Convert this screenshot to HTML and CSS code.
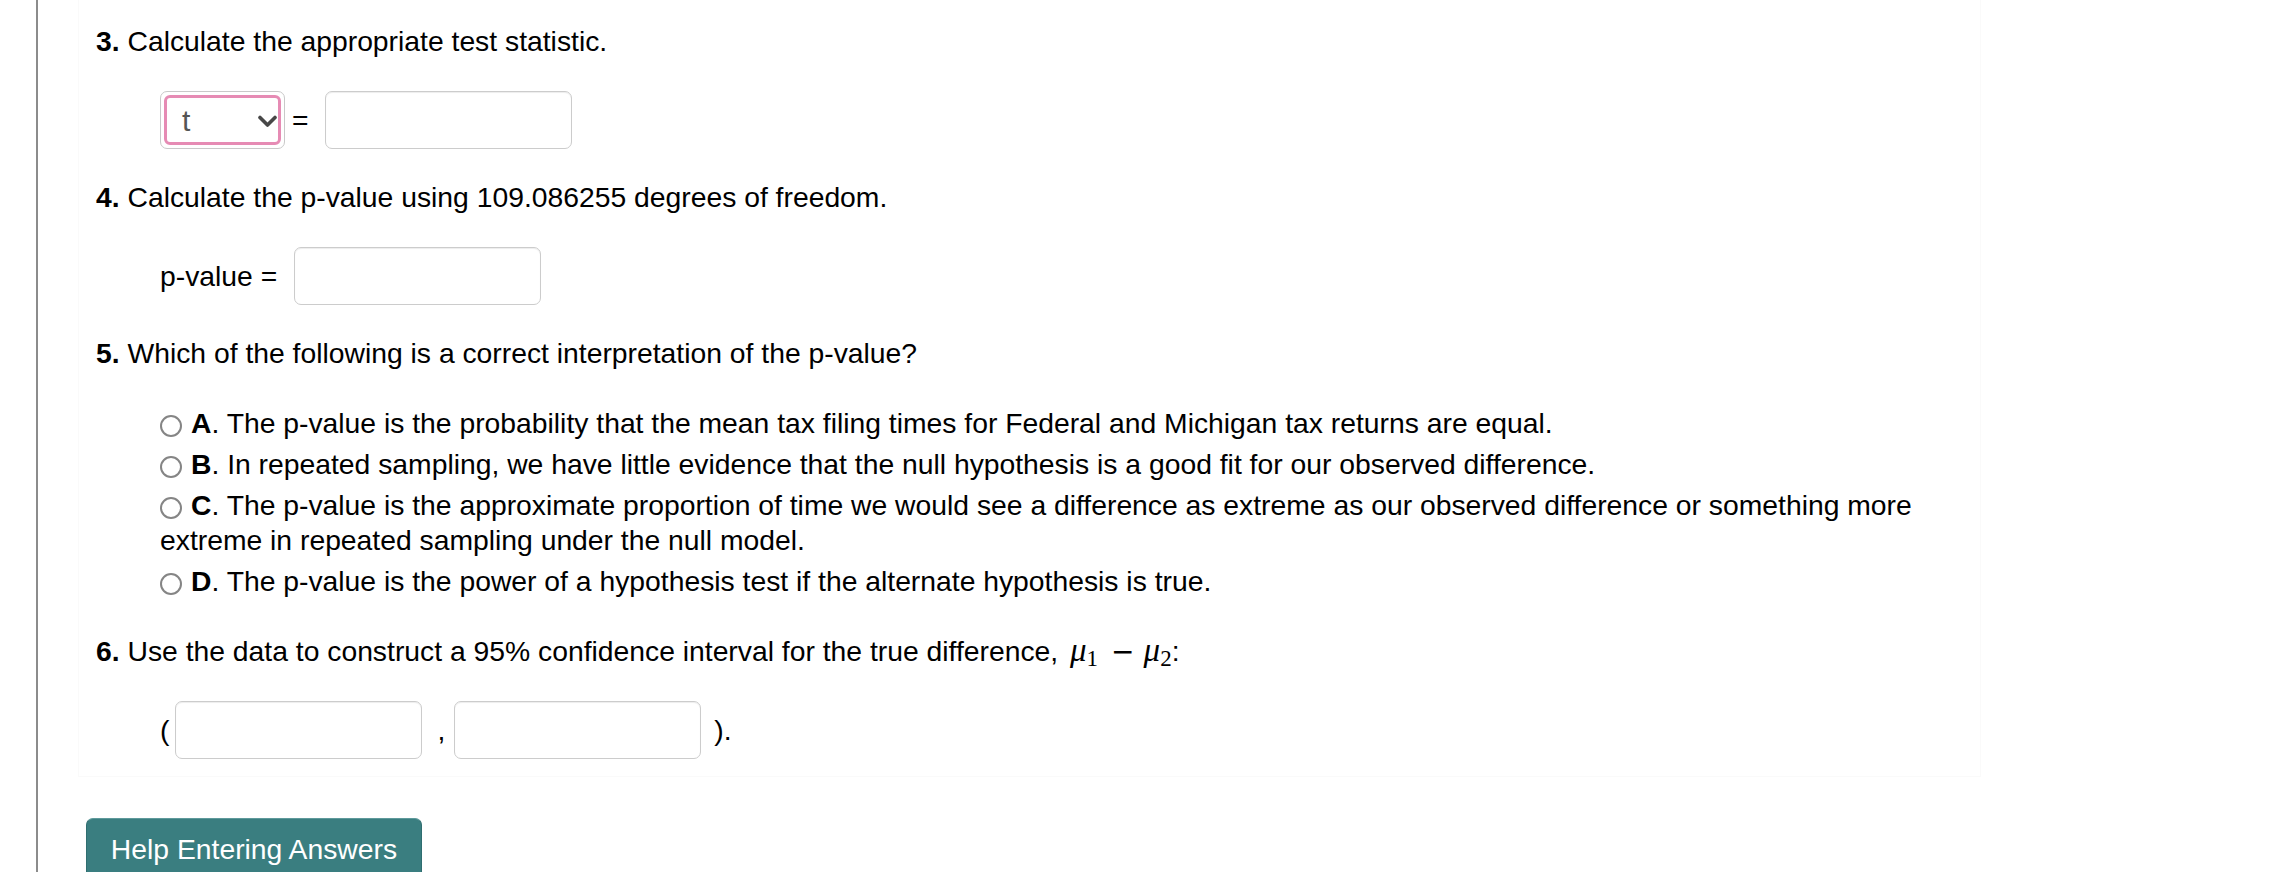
FILE: index.html
```html
<!DOCTYPE html>
<html lang="en">
<head>
<meta charset="utf-8">
<title>Hypothesis test</title>
<link rel="stylesheet" href="styles.css">
</head>
<body>
<div class="page">
  <div class="panel">
    <p class="q"><b>3.</b> Calculate the appropriate test statistic.</p>
    <div class="row">
      <span class="select">
        <span class="select-inner">
          <span class="select-val">t</span>
          <svg class="chev" width="19" height="13" viewBox="0 0 19 13"><path d="M2 2.5 L9.5 10 L17 2.5" fill="none" stroke="#474747" stroke-width="3.6" stroke-linecap="round" stroke-linejoin="round"/></svg>
        </span>
      </span>
      <span class="eq">=</span>
      <input class="ans" type="text">
    </div>

    <p class="q"><b>4.</b> Calculate the p-value using 109.086255 degrees of freedom.</p>
    <div class="row">
      <span>p-value =</span>
      <input class="ans ans-p" type="text">
    </div>

    <p class="q"><b>5.</b> Which of the following is a correct interpretation of the p-value?</p>
    <div class="opts">
      <label class="opt"><input class="radio" type="radio" name="interp"><b>A</b>. The p-value is the probability that the mean tax filing times for Federal and Michigan tax returns are equal.</label>
      <label class="opt"><input class="radio" type="radio" name="interp"><b>B</b>. In repeated sampling, we have little evidence that the null hypothesis is a good fit for our observed difference.</label>
      <label class="opt"><input class="radio" type="radio" name="interp"><b>C</b>. The p-value is the approximate proportion of time we would see a difference as extreme as our observed difference or something more extreme in repeated sampling under the null model.</label>
      <label class="opt"><input class="radio" type="radio" name="interp"><b>D</b>. The p-value is the power of a hypothesis test if the alternate hypothesis is true.</label>
    </div>

    <p class="q"><b>6.</b> Use the data to construct a 95% confidence interval for the true difference, <span class="math"><i>μ</i><sub>1</sub><span class="minus">−</span><i>μ</i><sub>2</sub></span>:</p>
    <div class="row">
      <span>(</span>
      <input class="ans ans-lo" type="text">
      <span class="comma">,</span>
      <input class="ans ans-hi" type="text">
      <span class="close">).</span>
    </div>
  </div>
  <button class="help" type="button">Help Entering Answers</button>
</div>
</body>
</html>
```
FILE: styles.css
```css
html, body {
  margin: 0;
  padding: 0;
  overflow: hidden;
  background: #fff;
}

body {
  font-family: "Liberation Sans", Arial, Helvetica, sans-serif;
  font-size: 28.3px;
  line-height: 35px;
  color: #000;
}

.page {
  margin-left: 36px;
  border-left: 2px solid #8c8c8c;
  padding-left: 40px;
  min-height: 100vh;
  padding-bottom: 20px;
}

.panel {
  width: 1903px;
  box-sizing: border-box;
  border: 1px solid #fafafa;
  border-top: none;
  padding: 24px 17px 17px 17px;
}

.q {
  margin: 0 0 32px 0;
}

.row {
  display: flex;
  align-items: center;
  margin: 0 0 31px 64px;
  height: 58px;
}

.panel .row:last-child {
  margin-bottom: 0;
}

.select {
  box-sizing: border-box;
  width: 125px;
  height: 58px;
  border: 1px solid #c9c9c9;
  border-radius: 7px;
  padding: 3px;
  display: flex;
}

.select-inner {
  flex: 1;
  border: 3.5px solid #e68bb4;
  border-radius: 6px;
  display: flex;
  align-items: center;
  justify-content: space-between;
  padding: 0 1px 0 15px;
  color: #555;
  font-size: 30px;
}

.chev {
  display: block;
  margin-top: 2px;
}

.eq {
  margin: 0 16px 0 7px;
}

.ans {
  box-sizing: border-box;
  width: 247px;
  height: 58px;
  margin: 0;
  padding: 0 10px;
  border: 1px solid #cccccc;
  border-radius: 7px;
  box-shadow: inset 0 1px 1px rgba(0, 0, 0, 0.075);
  font: inherit;
  background: #fff;
}

.ans-p {
  margin-left: 17px;
}

.ans-lo {
  margin-left: 6px;
}

.comma {
  margin-left: 15px;
}

.ans-hi {
  margin-left: 9px;
}

.close {
  margin-left: 13px;
}

.opts {
  margin: 0 0 31px 64px;
}

.opt {
  display: block;
  padding: 3px 0;
}

.radio {
  appearance: none;
  -webkit-appearance: none;
  box-sizing: border-box;
  width: 22px;
  height: 22px;
  margin: 0 9px 0 0;
  border: 2px solid #858585;
  border-radius: 50%;
  vertical-align: -4px;
  background: #fff;
}

.math {
  font-family: "Liberation Serif", "Times New Roman", serif;
  font-size: 33px;
  margin-left: 4px;
}

.math i {
  font-style: italic;
}

.math sub {
  font-size: 23px;
  vertical-align: -5px;
  line-height: 0;
}

.minus {
  font-family: "DejaVu Sans", sans-serif;
  font-size: 28px;
  margin: 0 9px 0 13px;
}

.help {
  margin-top: 41px;
  margin-left: 8px;
  box-sizing: border-box;
  width: 336px;
  height: 62px;
  padding: 0;
  border: 1px solid #2f6e70;
  border-top-color: #5e9a9b;
  border-radius: 7px;
  background: #3a7e80;
  color: #fff;
  font-family: "Liberation Sans", Arial, Helvetica, sans-serif;
  font-size: 28.3px;
  line-height: 35px;
  text-align: center;
  white-space: nowrap;
}
```
